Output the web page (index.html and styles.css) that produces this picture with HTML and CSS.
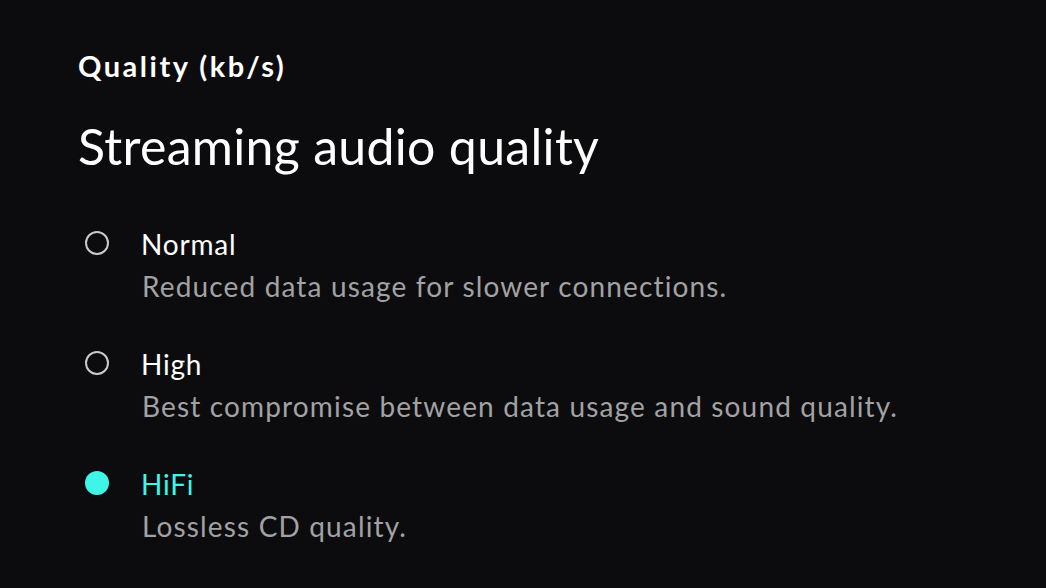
FILE: index.html
```html
<!DOCTYPE html>
<html lang="en">
<head>
<meta charset="utf-8">
<title>Streaming audio quality</title>
<link rel="stylesheet" href="styles.css">
</head>
<body>
<main class="settings">
  <h2 class="section-label">Quality (kb/s)</h2>
  <h1 class="setting-title">Streaming audio quality</h1>
  <ul class="options">
    <li class="option">
      <span class="radio"></span>
      <div class="option-text">
        <div class="option-name">Normal</div>
        <div class="option-desc">Reduced data usage for slower connections.</div>
      </div>
    </li>
    <li class="option">
      <span class="radio"></span>
      <div class="option-text">
        <div class="option-name">High</div>
        <div class="option-desc">Best compromise between data usage and sound quality.</div>
      </div>
    </li>
    <li class="option is-selected">
      <span class="radio"></span>
      <div class="option-text">
        <div class="option-name">HiFi</div>
        <div class="option-desc">Lossless CD quality.</div>
      </div>
    </li>
  </ul>
</main>
</body>
</html>
```
FILE: styles.css
```css
html, body {
  margin: 0;
  padding: 0;
  background: #0c0c0e;
}

body {
  width: 1046px;
  height: 588px;
  overflow: hidden;
  font-family: Lato, "Noto Sans", sans-serif;
  color: #ffffff;
}

.settings {
  padding: 46px 0 0 78px;
}

.section-label {
  margin: 0;
  font-size: 29px;
  font-weight: 700;
  line-height: 40px;
  letter-spacing: 2.5px;
}

.setting-title {
  margin: 30px 0 0;
  font-size: 50px;
  font-weight: 400;
  line-height: 60px;
  letter-spacing: 0.3px;
}

.options {
  list-style: none;
  margin: 50px 0 0;
  padding: 0 0 0 7px;
  display: flex;
  flex-direction: column;
  gap: 42px;
}

.option {
  display: flex;
  align-items: flex-start;
  gap: 32px;
}

.radio {
  flex: none;
  box-sizing: border-box;
  width: 24px;
  height: 24px;
  margin-top: 5px;
  border: 2px solid #c9c9cb;
  border-radius: 50%;
}

.option-text {
  display: flex;
  flex-direction: column;
  gap: 6px;
}

.option-name {
  font-size: 28px;
  line-height: 36px;
  letter-spacing: 0.8px;
  color: #ffffff;
}

.option-desc {
  padding-left: 1px;
  font-size: 28px;
  line-height: 36px;
  letter-spacing: 1.15px;
  color: #a2a2a4;
}

.is-selected .radio {
  border: none;
  background: #3ff5e8;
}

.is-selected .option-name {
  color: #3ff5e8;
}
```
